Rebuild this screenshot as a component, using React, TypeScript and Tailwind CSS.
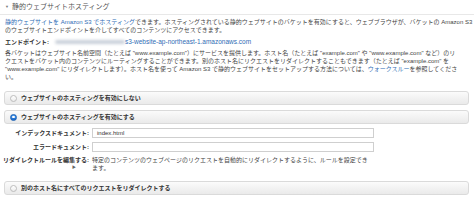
import React from "react";

function Radio({ checked }: { checked?: boolean }) {
  if (checked) {
    return (
      <span className="w-[7px] h-[7px] rounded-full bg-gradient-to-b from-[#4a9cf0] to-[#1667c9] border border-[#1a5fb4] flex items-center justify-center shrink-0">
        <span className="w-[2.5px] h-[2.5px] rounded-full bg-white" />
      </span>
    );
  }
  return (
    <span className="w-[7px] h-[7px] rounded-full bg-gradient-to-b from-white to-[#ececec] border border-[#bcbcbc] shrink-0" />
  );
}

function OptionBox({ label, checked, className = "" }: { label: string; checked?: boolean; className?: string }) {
  return (
    <div
      className={`mx-[4px] w-[465px] h-[14px] rounded-[3px] border border-[#dadada] bg-gradient-to-b from-[#fbfbfb] to-[#eaeaea] flex items-center gap-[4px] pl-[5px] font-bold text-[#333] ${className}`}
    >
      <Radio checked={checked} />
      <span>{label}</span>
    </div>
  );
}

export default function App() {
  const link = "text-[#2f6db5]";
  return (
    <div className="w-[474px] h-[200px] overflow-hidden bg-white text-[6px] leading-[8px] text-[#444] font-['Liberation_Sans','Noto_Sans_CJK_JP',sans-serif]">
      <div className="h-[15px] border-b border-[#e8e8e8] flex items-center pl-[5px] text-[7px] text-[#555]">
        <span className="text-[4px] text-[#777] mr-[3px]">▼</span>
        <span>静的ウェブサイトホスティング</span>
      </div>

      <div className="px-[5px] pt-[3px] whitespace-nowrap">
        <p>
          <span className={link}>静的ウェブサイトを Amazon S3 でホスティング</span>
          できます。ホスティングされている静的ウェブサイトのバケットを有効にすると、ウェブブラウザが、バケットの Amazon S3
          <br />
          のウェブサイトエンドポイントを介してすべてのコンテンツにアクセスできます。
        </p>
        <p className="mt-[4px] flex items-center">
          <span className="font-bold text-[#333]">エンドポイント:</span>
          <span className="inline-block ml-[6px] w-[70px] h-[4px] rounded-full bg-[#c9d0da] blur-[1.5px]" />
          <span className={`${link} text-[6.5px]`}>s3-website-ap-northeast-1.amazonaws.com</span>
        </p>
        <p className="mt-[3px]">
          各バケットはウェブサイト名前空間（たとえば "www.example.com"）にサービスを提供します。ホスト名（たとえば "example.com" や "www.example.com" など）のリ
          <br />
          クエストをバケット内のコンテンツにルーティングすることができます。別のホスト名にリクエストをリダイレクトすることもできます（たとえば "example.com" を
          <br />
          "www.example.com" にリダイレクトします）。ホスト名を使って Amazon S3 で静的ウェブサイトをセットアップする方法については、
          <span className={link}>ウォークスルー</span>
          を参照してくださ
          <br />
          い。
        </p>
      </div>

      <OptionBox className="mt-[10px]" label="ウェブサイトのホスティングを有効にしない" />
      <OptionBox className="mt-[5px]" label="ウェブサイトのホスティングを有効にする" checked />

      <div className="mt-[4px] flex flex-col gap-[4px]">
        <div className="flex items-center">
          <span className="w-[92px] text-right font-bold text-[#333] pr-[3px]">インデックスドキュメント:</span>
          <span className="w-[282px] h-[10px] border border-[#cfcfcf] bg-white flex items-center pl-[4px] text-[#333]">index.html</span>
        </div>
        <div className="flex items-center">
          <span className="w-[92px] text-right font-bold text-[#333] pr-[3px]">エラードキュメント:</span>
          <span className="w-[282px] h-[10px] border border-[#cfcfcf] bg-white" />
        </div>
        <div className="flex items-start">
          <div className="w-[92px] flex flex-col items-end pr-[3px] whitespace-nowrap">
            <span className="font-bold text-[#333]">リダイレクトルールを編集する:</span>
            <span className="text-[4px] leading-[8px] text-[#666] mr-[13px]">▶</span>
          </div>
          <p className="whitespace-nowrap">
            特定のコンテンツのウェブページのリクエストを自動的にリダイレクトするように、ルールを設定でき
            <br />
            ます。
          </p>
        </div>
      </div>

      <OptionBox className="mt-[9px]" label="別のホスト名にすべてのリクエストをリダイレクトする" />
    </div>
  );
}
